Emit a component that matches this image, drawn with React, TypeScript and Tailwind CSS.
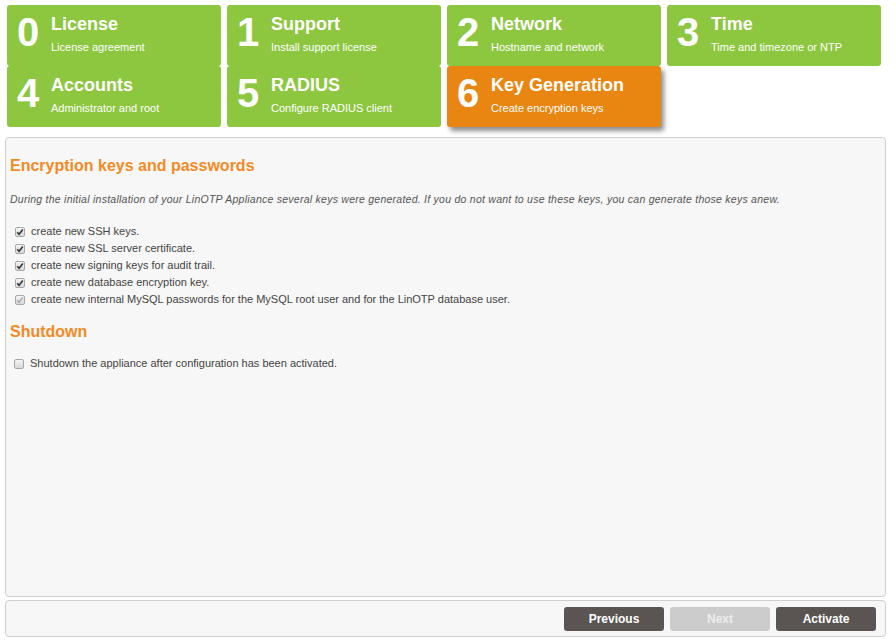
import React from "react";

type Step = { num: number; title: string; sub: string; active?: boolean };

const STEPS: Step[] = [
  { num: 0, title: "License", sub: "License agreement" },
  { num: 1, title: "Support", sub: "Install support license" },
  { num: 2, title: "Network", sub: "Hostname and network" },
  { num: 3, title: "Time", sub: "Time and timezone or NTP" },
  { num: 4, title: "Accounts", sub: "Administrator and root" },
  { num: 5, title: "RADIUS", sub: "Configure RADIUS client" },
  { num: 6, title: "Key Generation", sub: "Create encryption keys", active: true },
];

const KEYS = [
  { label: "create new SSH keys.", checked: true },
  { label: "create new SSL server certificate.", checked: true },
  { label: "create new signing keys for audit trail.", checked: true },
  { label: "create new database encryption key.", checked: true },
  {
    label:
      "create new internal MySQL passwords for the MySQL root user and for the LinOTP database user.",
    checked: true,
    disabled: true,
  },
];

function Check({ checked, disabled }: { checked?: boolean; disabled?: boolean }) {
  return (
    <span className="w-[10px] h-[10px] rounded-[2px] border border-[#a8a8a8] bg-gradient-to-b from-[#f4f4f4] to-[#d8d8d8] flex items-center justify-center shrink-0">
      {checked && (
        <svg width="8" height="8" viewBox="0 0 8 8">
          <path
            d="M1.2 4.2 L3.1 6.2 L6.8 1.4"
            fill="none"
            stroke={disabled ? "#aaa" : "#333"}
            strokeWidth="1.6"
          />
        </svg>
      )}
    </span>
  );
}

function StepTile({ step }: { step: Step }) {
  return (
    <div
      className={
        "h-[61px] rounded-[3px] flex text-white " +
        (step.active
          ? "bg-[#e98612] shadow-[3px_4px_5px_rgba(0,0,0,0.45)] relative z-10"
          : "bg-[#8dc63f]")
      }
    >
      <div className="w-[44px] pl-[10px] pt-[7px] text-[40px] leading-[40px] font-bold">
        {step.num}
      </div>
      <div className="pt-[9px]">
        <div className="text-[18px] leading-[20px] font-bold">{step.title}</div>
        <div className="text-[11px] leading-[14px] mt-[6px]">{step.sub}</div>
      </div>
    </div>
  );
}

export default function App() {
  return (
    <div className="w-[895px] h-[642px] bg-white font-['Liberation_Sans',Arial,sans-serif] flex flex-col">
      <div className="grid grid-cols-[214px_214px_214px_214px] gap-x-[6px] pl-[7px] pt-[5px]">
        {STEPS.map((s) => (
          <StepTile key={s.num} step={s} />
        ))}
      </div>

      <div className="mx-[5px] mt-[10px] w-[881px] h-[460px] border border-[#cfcfcf] rounded-[4px] bg-[#f7f7f7] px-[4px]">
        <h2 className="text-[#f48a24] text-[16px] font-bold mt-[18px] leading-[20px]">
          Encryption keys and passwords
        </h2>
        <p className="italic text-[10.5px] text-[#555] mt-[16px] leading-[14px] tracking-[0.25px]">
          During the initial installation of your LinOTP Appliance several keys were generated.
          If you do not want to use these keys, you can generate those keys anew.
        </p>
        <div className="mt-[17px] flex flex-col">
          {KEYS.map((k) => (
            <div key={k.label} className="h-[17px] flex items-center gap-[6px] pl-[5px] text-[11px] text-[#444]">
              <Check checked={k.checked} disabled={k.disabled} />
              <span>{k.label}</span>
            </div>
          ))}
        </div>
        <h2 className="text-[#f48a24] text-[16px] font-bold mt-[14px] leading-[20px]">Shutdown</h2>
        <div className="mt-[13px] h-[17px] flex items-center gap-[6px] pl-[4px] text-[11px] text-[#444]">
          <Check />
          <span>Shutdown the appliance after configuration has been activated.</span>
        </div>
      </div>

      <div className="mx-[5px] mt-[3px] w-[881px] h-[37px] border border-[#cfcfcf] rounded-[4px] bg-[#f7f7f7] flex items-center justify-end gap-[6px] pr-[9px]">
        <button className="w-[100px] h-[24px] rounded-[3px] bg-[#5a5553] text-white text-[12px] font-bold">
          Previous
        </button>
        <button className="w-[100px] h-[24px] rounded-[3px] bg-[#cccccc] text-[#ececec] text-[12px] font-bold">
          Next
        </button>
        <button className="w-[100px] h-[24px] rounded-[3px] bg-[#5a5553] text-white text-[12px] font-bold">
          Activate
        </button>
      </div>
    </div>
  );
}
